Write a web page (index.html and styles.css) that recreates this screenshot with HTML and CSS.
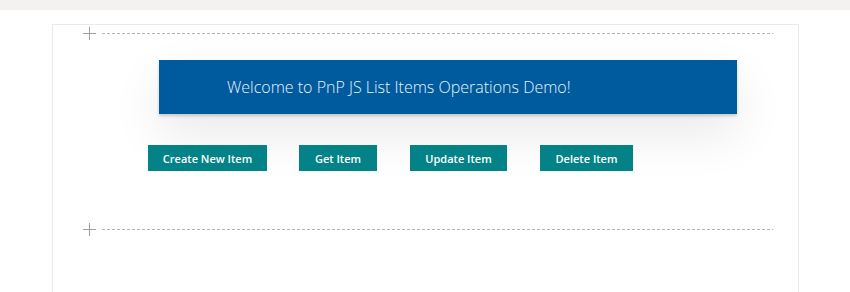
FILE: index.html
```html
<!DOCTYPE html>
<html lang="en">
<head>
  <meta charset="UTF-8">
  <meta name="viewport" content="width=device-width, initial-scale=1.0">
  <title>PnP JS List Items Operations Demo</title>
  <link rel="stylesheet" href="styles.css">
</head>
<body>
  <div class="top-bar"></div>

  <div class="canvas">
    <div class="zone-line">
      <svg class="plus" width="13" height="13" viewBox="0 0 13 13">
        <path d="M6.5 0v13M0 6.5h13" stroke="#a19f9d" stroke-width="1" fill="none"/>
      </svg>
      <div class="dashes"></div>
    </div>

    <div class="banner">Welcome to PnP JS List Items Operations Demo!</div>

    <div class="actions">
      <button class="btn btn-create">Create New Item</button>
      <button class="btn btn-get">Get Item</button>
      <button class="btn btn-update">Update Item</button>
      <button class="btn btn-delete">Delete Item</button>
    </div>

    <div class="zone-line zone-bottom">
      <svg class="plus" width="13" height="13" viewBox="0 0 13 13">
        <path d="M6.5 0v13M0 6.5h13" stroke="#a19f9d" stroke-width="1" fill="none"/>
      </svg>
      <div class="dashes"></div>
    </div>
  </div>
</body>
</html>
```

FILE: styles.css
```css
body {
  margin: 0;
  font-family: 'Open Sans', 'Noto Sans', Arial, sans-serif;
  background: #ffffff;
  overflow: hidden;
}

/* Suite bar strip at the very top */
.top-bar {
  height: 10px;
  background: #f3f2f1;
}

/* Page canvas */
.canvas {
  margin: 14px 0 0 52px;
  width: 747px;
  height: 268px;
  box-sizing: border-box;
  border: 1px solid #eaeaea;
  border-bottom: none;
  padding: 0 25px 0 30px;
}

.zone-line {
  display: flex;
  align-items: center;
  gap: 6px;
  height: 17px;
}

.zone-bottom {
  margin-top: 50px;
}

.plus {
  flex: none;
  display: block;
}

.dashes {
  flex: 1;
  height: 1px;
  background: repeating-linear-gradient(90deg, #b4b4b4 0 3px, transparent 3px 5px);
}

/* Welcome banner */
.banner {
  margin: 18px 0 0 76px;
  width: 578px;
  height: 54px;
  box-sizing: border-box;
  padding-left: 68px;
  display: flex;
  align-items: center;
  background: #005a9e;
  color: #e8f3fc;
  font-size: 16px;
  font-weight: 300;
  box-shadow: 0 2px 3px rgba(0, 0, 0, 0.18), 0 20px 50px rgba(0, 0, 0, 0.09);
}

/* Action buttons */
.actions {
  display: flex;
  gap: 32px;
  margin: 31px 0 0 65px;
}

.btn {
  height: 26px;
  border: none;
  background: #038387;
  color: #ffffff;
  font-family: inherit;
  font-size: 11px;
  font-weight: 600;
  padding: 0;
  cursor: pointer;
}

.btn-create { width: 119px; }
.btn-get { width: 78px; }
.btn-update { width: 97px; margin-left: 1px; }
.btn-delete { width: 93px; margin-left: 1px; }
```
